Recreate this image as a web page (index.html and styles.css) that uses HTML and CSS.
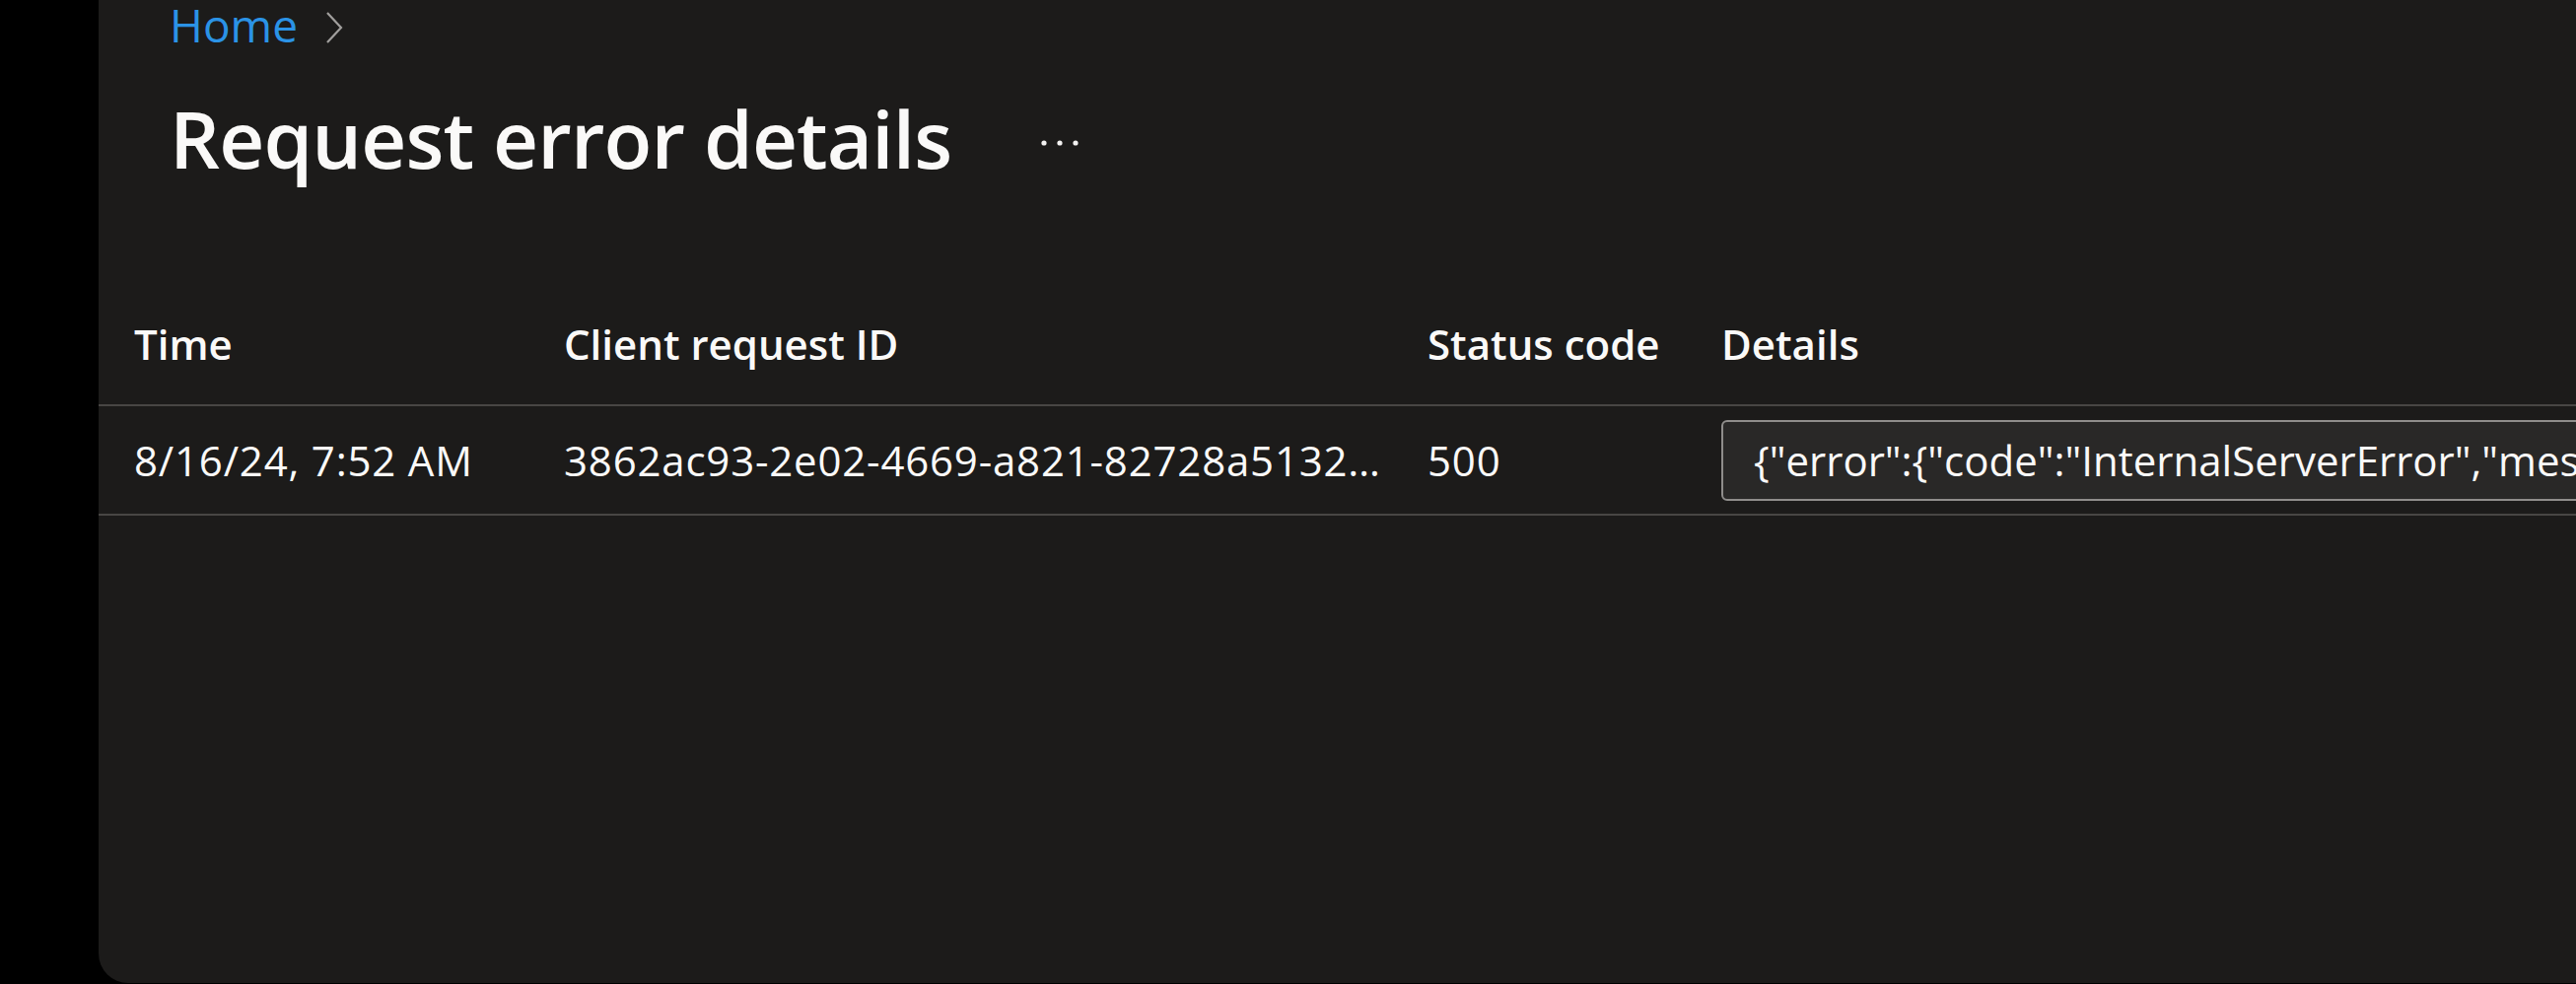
FILE: index.html
```html
<!DOCTYPE html>
<html lang="en">
<head>
<meta charset="utf-8">
<title>Request error details</title>
<link rel="stylesheet" href="styles.css">
</head>
<body>
<div class="shell">
  <main class="panel">
    <nav class="breadcrumb">
      <a class="crumb-link" href="#">Home</a>
      <svg class="chevron" width="18" height="34" viewBox="0 0 18 34" aria-hidden="true"><path d="M2 2 L16 17 L2 32" fill="none" stroke="#a19f9d" stroke-width="2.2"/></svg>
    </nav>
    <div class="title-row">
      <h1 class="title">Request error details</h1>
      <button class="more-btn" aria-label="More actions">
        <svg width="44" height="10" viewBox="0 0 44 10" aria-hidden="true"><circle cx="6" cy="5" r="2.6" fill="#f3f2f1"/><circle cx="22" cy="5" r="2.6" fill="#f3f2f1"/><circle cx="38" cy="5" r="2.6" fill="#f3f2f1"/></svg>
      </button>
    </div>
    <div class="table">
      <div class="row head">
        <div class="cell">Time</div>
        <div class="cell">Client request ID</div>
        <div class="cell">Status code</div>
        <div class="cell">Details</div>
      </div>
      <div class="row body">
        <div class="cell num">8/16/24, 7:52 AM</div>
        <div class="cell num trunc">3862ac93-2e02-4669-a821-82728a5132f4e8a1</div>
        <div class="cell num">500</div>
        <div class="cell details">
          <div class="json-box">{"error":{"code":"InternalServerError","message":"Encountered internal server error. Diagnostic information: timestamp '20240816T075214Z'"}}</div>
        </div>
      </div>
    </div>
  </main>
</div>
</body>
</html>
```
FILE: styles.css
```css
html, body {
  margin: 0;
  padding: 0;
  background: #000;
  height: 100%;
  overflow: hidden;
}

.shell {
  display: flex;
  height: 998px;
  padding-left: 100px;
  box-sizing: border-box;
}

.panel {
  flex: 1;
  height: 997px;
  background: #1c1b1a;
  border-bottom-left-radius: 30px;
  overflow: hidden;
  font-family: "Open Sans", "Noto Sans", sans-serif;
  color: #faf9f8;
}

.breadcrumb {
  display: flex;
  align-items: center;
  gap: 28px;
  height: 50px;
  padding-left: 72px;
}

.crumb-link {
  font-size: 46px;
  line-height: 50px;
  color: #2b93e6;
  text-decoration: none;
}

.chevron {
  margin-top: 6px;
}

.title-row {
  display: flex;
  align-items: center;
  margin-top: 40px;
  padding-left: 72px;
  height: 100px;
}

.title {
  margin: 0;
  font-size: 80px;
  letter-spacing: -0.9px;
  line-height: 100px;
  font-weight: 600;
}

.more-btn {
  margin-left: 88px;
  margin-top: 10px;
  background: none;
  border: none;
  padding: 0;
  width: 44px;
  height: 10px;
  display: flex;
}

.table {
  margin-top: 110px;
}

.row {
  display: grid;
  grid-template-columns: 436px 876px 298px 1fr;
  border-bottom: 2px solid #484644;
}

.cell {
  font-size: 42px;
  line-height: 57px;
  padding-left: 36px;
  white-space: nowrap;
  min-width: 0;
}

.row.head {
  height: 112px;
  box-sizing: border-box;
  padding-top: 20px;
}

.row.head .cell {
  font-weight: 600;
}

.row.body {
  height: 111px;
  box-sizing: border-box;
  align-items: center;
}

.num {
  letter-spacing: 0.8px;
}

.trunc {
  overflow: hidden;
  text-overflow: ellipsis;
  padding-right: 4px;
}

.details {
  overflow: hidden;
}

.json-box {
  width: 1400px;
  height: 82px;
  box-sizing: border-box;
  border: 2px solid #8f8d8b;
  border-radius: 6px;
  background: #292827;
  padding-left: 31px;
  display: flex;
  align-items: center;
  white-space: nowrap;
  overflow: hidden;
}
```
